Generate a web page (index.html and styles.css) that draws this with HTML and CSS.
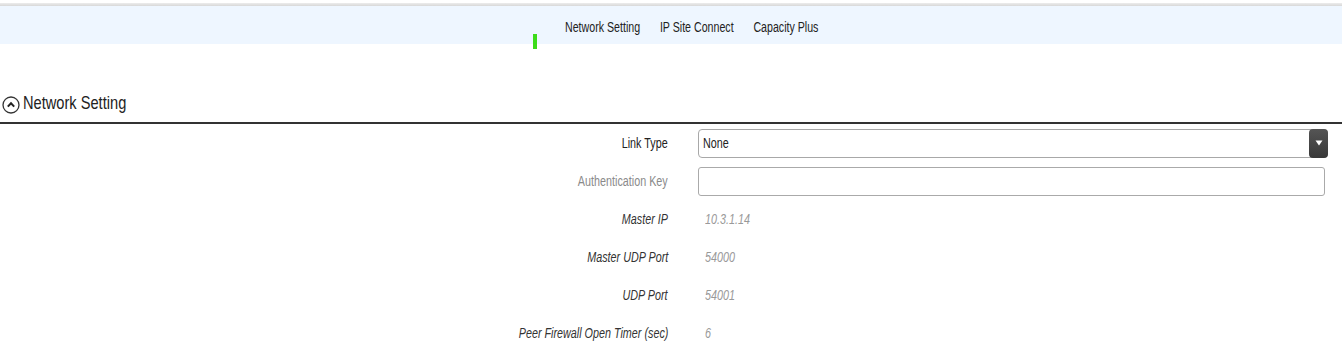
FILE: index.html
```html
<!DOCTYPE html>
<html>
<head>
<meta charset="utf-8">
<link rel="stylesheet" href="styles.css">
</head>
<body>
<div class="topline"></div>
<div class="navbar">
  <span class="marker"></span>
  <div class="nav">
    <span class="nav-item">Network Setting</span>
    <span class="nav-item">IP Site Connect</span>
    <span class="nav-item">Capacity Plus</span>
  </div>
</div>
<div class="section">
  <div class="section-head">
    <svg class="toggle" width="18" height="18" viewBox="0 0 18 18">
      <circle cx="9" cy="9" r="8" fill="none" stroke="#333" stroke-width="1.3"/>
      <path d="M5.8 10.6 L9 7.2 L12.2 10.6" fill="none" stroke="#222" stroke-width="2"/>
    </svg>
    <span class="section-title">Network Setting</span>
  </div>
  <div class="form">
    <div class="label"><span class="cond">Link Type</span></div>
    <div class="field">
      <div class="select">
        <span class="select-text cond">None</span>
        <span class="select-btn"><svg width="8" height="6" viewBox="0 0 8 6"><path d="M0.5 0.5 H7.5 L4 5.5 Z" fill="#fff"/></svg></span>
      </div>
    </div>
    <div class="label disabled"><span class="cond">Authentication Key</span></div>
    <div class="field"><div class="input"></div></div>
    <div class="label ital"><span class="cond">Master IP</span></div>
    <div class="value"><span class="cond">10.3.1.14</span></div>
    <div class="label ital"><span class="cond">Master UDP Port</span></div>
    <div class="value"><span class="cond">54000</span></div>
    <div class="label ital"><span class="cond">UDP Port</span></div>
    <div class="value"><span class="cond">54001</span></div>
    <div class="label ital"><span class="cond">Peer Firewall Open Timer (sec)</span></div>
    <div class="value"><span class="cond">6</span></div>
  </div>
</div>
</body>
</html>
```

FILE: styles.css
```css
html, body {
  margin: 0;
  padding: 0;
  background: #fff;
}
body {
  font-family: "Liberation Sans", "DejaVu Sans", sans-serif;
  color: #222;
}
.cond {
  display: inline-block;
  transform: scaleX(0.77);
  white-space: nowrap;
}
.topline {
  margin-top: 3px;
  height: 3px;
  background: linear-gradient(#ececec, #d8d8d8);
}
.navbar {
  position: relative;
  height: 38px;
  background: #eef6ff;
  display: flex;
  justify-content: center;
}
.nav {
  display: flex;
  gap: 26px;
  margin-left: 42px;
  padding-top: 13px;
  font-size: 14px;
  color: #222;
  white-space: nowrap;
  transform: scaleX(0.76);
  transform-origin: center;
  height: 20px;
}
.marker {
  position: absolute;
  left: calc(50% - 138px);
  top: 28px;
  width: 4px;
  height: 15px;
  background: #3cdc1a;
}
.section {
  margin-top: 46px;
}
.section-head {
  display: flex;
  align-items: center;
  gap: 3px;
  padding-left: 2px;
  height: 34px;
  border-bottom: 2px solid #333;
  box-sizing: border-box;
  padding-bottom: 6px;
}
.toggle {
  flex: none;
  margin-top: 4px;
}
.section-title {
  font-size: 19px;
  color: #222;
  display: inline-block;
  transform: scaleX(0.77);
  transform-origin: left center;
  white-space: nowrap;
}
.form {
  display: grid;
  grid-template-columns: 668px 1fr;
  column-gap: 30px;
  grid-auto-rows: 38px;
  align-items: center;
  padding-right: 14px;
  font-size: 14px;
}
.label {
  text-align: right;
  color: #222;
}
.label .cond {
  transform-origin: right center;
}
.label.disabled {
  color: #8a8a8a;
}
.label.ital {
  font-style: italic;
  color: #333;
}
.value {
  font-style: italic;
  color: #999;
  padding-left: 7px;
}
.value .cond, .select-text {
  transform-origin: left center;
}
.select {
  height: 29px;
  box-sizing: border-box;
  border: 1px solid #a8a8a8;
  border-radius: 4px;
  display: flex;
  align-items: center;
  justify-content: space-between;
  padding-left: 4px;
  background: #fff;
}
.select-text {
  color: #222;
}
.select-btn {
  width: 19px;
  height: 29px;
  margin-right: -1px;
  background: linear-gradient(#555, #383838);
  border-radius: 4px;
  display: flex;
  align-items: center;
  justify-content: center;
}
.input {
  height: 29px;
  box-sizing: border-box;
  border: 1px solid #aaa;
  border-radius: 3px;
  margin-right: 3px;
  background: #fff;
}
```
